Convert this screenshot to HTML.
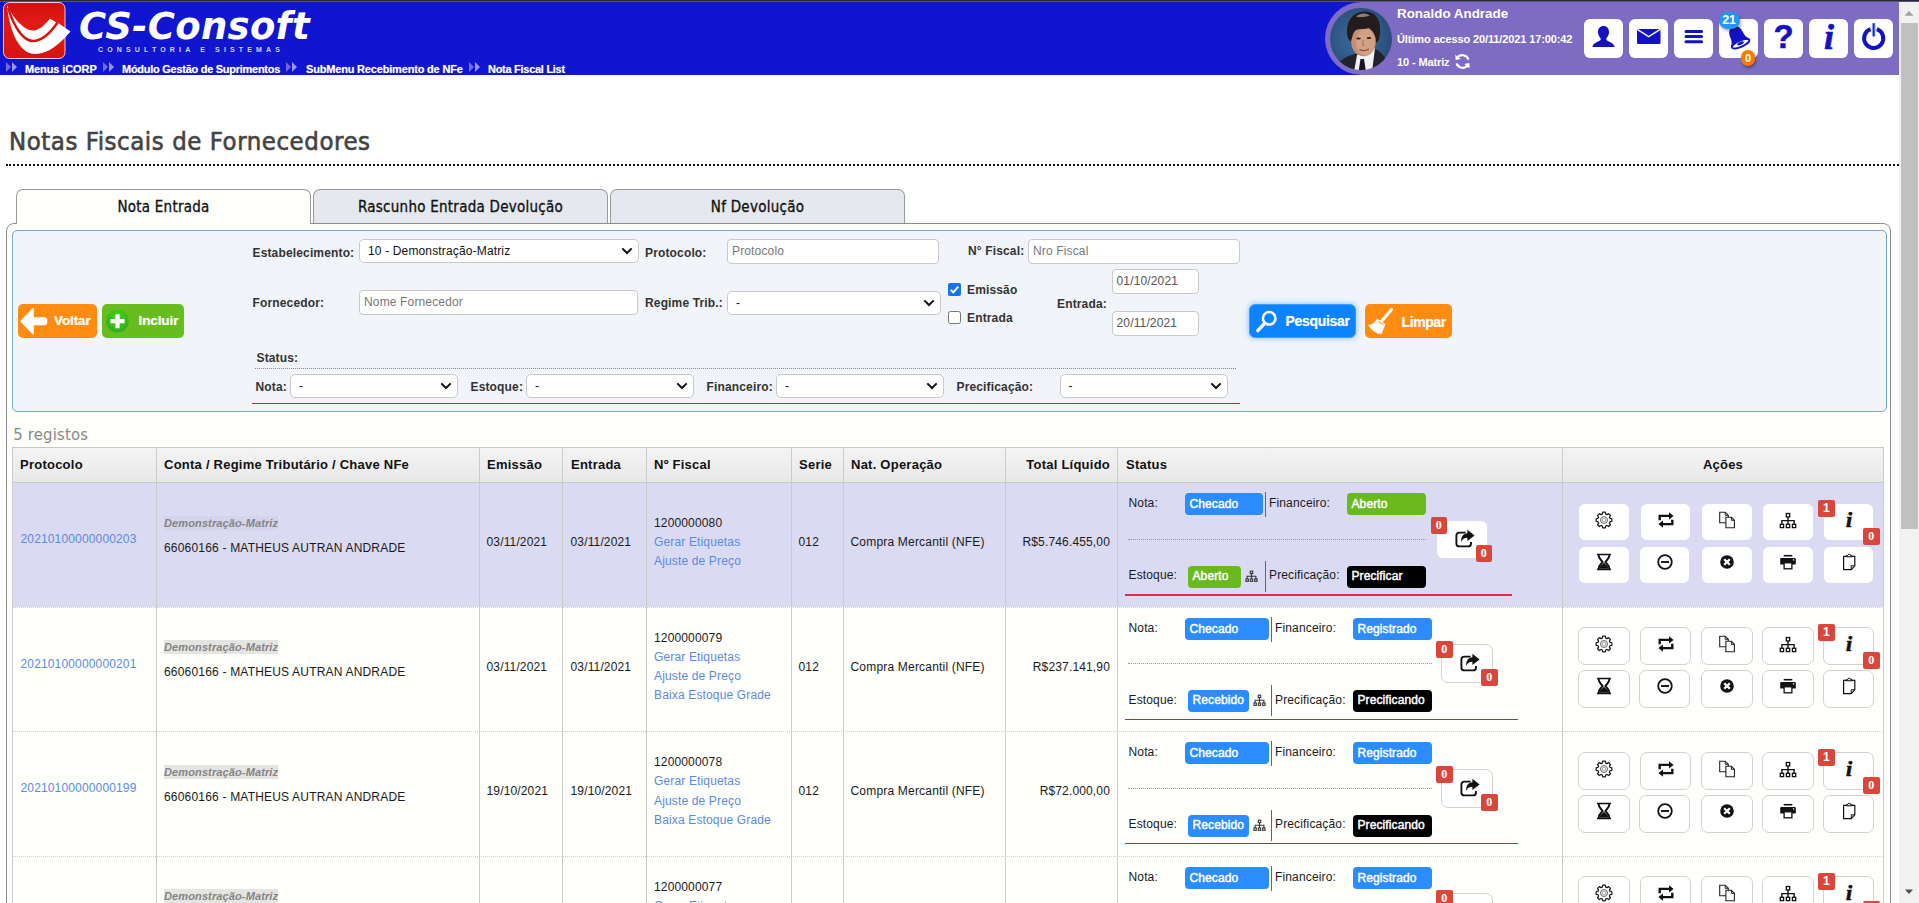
<!DOCTYPE html>
<html lang="pt-BR">
<head>
<meta charset="utf-8">
<title>Notas Fiscais de Fornecedores</title>
<style>
*{box-sizing:border-box}
html,body{margin:0;padding:0}
body{width:1919px;height:903px;overflow:hidden;position:relative;background:#fff;font-family:"Liberation Sans",Arial,sans-serif;font-size:12px;color:#222}
.abs{position:absolute}
/* ---------- top ---------- */
#topline{left:0;top:0;width:1919px;height:2px;background:#2b2b2b;border-bottom:1px solid #50508c}
#hdr{left:0;top:2px;width:1899px;height:73px;background:#1015cf;overflow:hidden}
#purple{left:1361px;top:0;width:538px;height:73px;background:#7e6bc4}
#pcirc{left:1325px;top:0;width:73px;height:73px;border-radius:50%;background:#7e6bc4}
#crumbs{left:0;top:58px;height:16px;color:#fff;font-size:11px;font-weight:bold;white-space:nowrap;letter-spacing:-.1px}
#crumbs span{position:absolute;top:4.5px;text-shadow:0 0 1px rgba(255,255,255,.5)}
#crumbs svg{position:absolute;top:2.5px}
.hbtn{position:absolute;top:19px;width:39px;height:39px;background:#fff;border-radius:6px}
.hbtn svg{position:absolute;left:0;top:0}
.uinfo{position:absolute;color:#fff;white-space:nowrap}
/* ---------- scrollbar ---------- */
#sb{left:1899px;top:2px;width:20px;height:901px;background:#f1f1f1}
#sbthumb{left:2px;top:21px;width:17px;height:506px;background:#c1c1c1}
/* ---------- title ---------- */
#title{-webkit-text-stroke:.6px #444;left:9px;top:125px;font-family:"DejaVu Sans Condensed","DejaVu Sans",sans-serif;font-size:25.5px;color:#444;letter-spacing:.55px;white-space:nowrap;line-height:32px}
#dots{left:6px;top:164px;width:1893px;height:0;border-top:2px dotted #111}
/* ---------- tabs ---------- */
.tab{position:absolute;top:189px;height:34px;border:1px solid #999;border-bottom:none;border-radius:7px 7px 0 0;background:#e5e8ee;font-family:"DejaVu Sans Condensed","DejaVu Sans",sans-serif;font-size:15px;letter-spacing:.25px;color:#111;-webkit-text-stroke:.3px #111;text-align:center;line-height:34px;white-space:nowrap}
.tab.on{background:#fefefa;height:35px;z-index:3}
#cont{left:6px;top:223px;width:1885px;height:700px;border:1px solid #8c8c8c;border-radius:8px;background:#fefefa}
#panel{left:12px;top:230px;width:1875px;height:182px;border:1px solid #74a9d2;border-radius:5px;background:#f1f4f9}

/* ---------- filter ---------- */
.fl{position:absolute;font:bold 12px/14px "Liberation Sans",sans-serif;color:#333;letter-spacing:.15px;white-space:nowrap}
.fi{position:absolute;background:#fff;border:1px solid #c9c9c9;border-radius:4px;font:12px/23px "Liberation Sans",sans-serif;color:#777;letter-spacing:.15px;white-space:nowrap;padding-left:4px;overflow:hidden}
.fs{position:absolute;background:#fff;border:1px solid #c9c9c9;border-radius:5px;font:12px/22px "Liberation Sans",sans-serif;color:#111;letter-spacing:.15px;white-space:nowrap;padding-left:8px;overflow:hidden;height:24px}
.fs svg{position:absolute;right:5px;top:7px}
.cb{position:absolute;width:13px;height:13px;border-radius:2px}
.btn{position:absolute;border-radius:5px;color:#fff;font:bold 13.5px/16px "Liberation Sans",sans-serif;white-space:nowrap;letter-spacing:-.1px}
.btn span{position:absolute;top:9px;text-shadow:0 0 1px rgba(255,255,255,.55)}
.btn svg{position:absolute;left:0;top:0}

/* ---------- table ---------- */
#reg{left:13.300px;top:425px;font:16.5px/20px "DejaVu Sans Condensed","DejaVu Sans",sans-serif;color:#888;letter-spacing:.2px;white-space:nowrap}
#tbl{left:12px;top:447px;width:1872px;height:470px;overflow:hidden}
#th{position:absolute;left:0;top:0;width:1872px;height:36px;border-top:1px solid #c8c8c8;border-bottom:1px solid #c8c8c8;background:linear-gradient(#f4f4f4,#e8e8e8)}
#th span{position:absolute;top:8.500px;font:bold 13px/15px "Liberation Sans",sans-serif;color:#111;letter-spacing:.24px;white-space:nowrap}
.row{position:absolute;left:0;width:1872px;background:#fefefa}
.row.hov{background:#dadaf3}
.row.hov+*{}
.row>*{position:absolute}
.tx{font:12px/14px "Liberation Sans",sans-serif;color:#1a1a1a;letter-spacing:.15px;white-space:nowrap}
a.lk{color:#5b8ae6;text-decoration:none}
.dm{font:italic bold 11px/14px "Liberation Sans",sans-serif;color:#848484;background:#e4e4e2;letter-spacing:.12px;white-space:nowrap}
.hov .dm{background:#d4d4ea}
.bd{height:22px;border-radius:4px;color:#fff;font:12px/22px "Liberation Sans",sans-serif;-webkit-text-stroke:.45px #fff;padding-left:4.500px;letter-spacing:.1px;white-space:nowrap;overflow:hidden}
.blue{background:#2b8cff}.green{background:#6aba1e}.black{background:#000}
.vs{width:1px;background:#666}
.dl{height:0;border-top:1px dotted #999}
.rl{height:1px;background:#a83232}
.hov .rl{height:1.500px;background:#d8304a}
.hl{position:absolute;left:0;width:1872px;height:0;border-top:1px dotted #cfcfcf}
.vl{position:absolute;top:0;width:1px;height:470px;background:#cbcbcb}
.ab{height:38px;background:#fff;border:1px solid #d2d2d2;border-radius:7px}
.hov .ab{border-color:#dadaf3}
.ab svg{position:absolute;left:16px;top:7px}
.ab.r2 svg{top:6px}
.ab.sh svg{left:0;top:0}
.ab .ic{position:absolute}
.ii{position:absolute;left:0;top:3px;width:50px;text-align:center;font:italic bold 22px/26px "Liberation Serif",serif;color:#111;-webkit-text-stroke:.7px #111}
.rb{width:16.500px;height:16.500px;border-radius:2px;background:#d9463c;color:#fff;font:bold 12px/16px "Liberation Serif",serif;text-align:center;z-index:2}
.rb.ss{font:bold 12px/16px "Liberation Sans",sans-serif}
.smi{width:13px;height:13px}
</style>
</head>
<body>
<div id="topline" class="abs"></div>
<div id="hdr" class="abs">
  <div id="purple" class="abs"></div>
  <div id="pcirc" class="abs"></div>
</div>

<!-- logo -->
<svg class="abs" style="left:0;top:0" width="80" height="62" viewBox="0 0 80 62">
  <defs><linearGradient id="lg" x1="0" y1="0" x2="0" y2="1"><stop offset="0" stop-color="#d01010"/><stop offset=".35" stop-color="#e21a12"/><stop offset="1" stop-color="#d61410"/></linearGradient></defs>
  <rect x="3.5" y="2.5" width="61.5" height="56" rx="6" fill="url(#lg)" stroke="#f6c8d4" stroke-width="1"/>
  <path d="M7,5 C9,28 18,54 35,54 C48,54 60,44 70.5,31.5 L58.5,23.2 L56.2,22.4 L50,18.4 C44,26 38,30.5 33,30.5 C24,30.5 13,18 7,5 Z" fill="#fff"/>
  <path d="M8.2,8 C13,24 22,41 33,41 C42,41 51,32 57.4,22.8" fill="none" stroke="#d8140f" stroke-width="2.5"/>
</svg>
<div class="abs" style="left:79px;top:5px;font:italic bold 37px/43px 'DejaVu Sans',sans-serif;color:#fff;letter-spacing:.3px;white-space:nowrap">CS-Consoft</div>
<div class="abs" style="left:98px;top:45px;font:bold 7px/9px 'Liberation Sans',sans-serif;color:#d4d4ff;letter-spacing:4.15px;white-space:nowrap">CONSULTORIA E SISTEMAS</div>
<!-- breadcrumbs -->
<div id="crumbs" class="abs">
  <svg style="left:5px" width="14" height="12" viewBox="0 0 14 12"><path d="M1,1 L6,6 L1,11Z" fill="#7468dc"/><path d="M7,1 L12,6 L7,11Z" fill="#9a92ea"/></svg>
  <span style="left:25px;letter-spacing:-.1px">Menus iCORP</span>
  <svg style="left:102px" width="14" height="12" viewBox="0 0 14 12"><path d="M1,1 L6,6 L1,11Z" fill="#7468dc"/><path d="M7,1 L12,6 L7,11Z" fill="#9a92ea"/></svg>
  <span style="left:122px;letter-spacing:-.27px">Módulo Gestão de Suprimentos</span>
  <svg style="left:285px" width="14" height="12" viewBox="0 0 14 12"><path d="M1,1 L6,6 L1,11Z" fill="#7468dc"/><path d="M7,1 L12,6 L7,11Z" fill="#9a92ea"/></svg>
  <span style="left:306px;letter-spacing:-.18px">SubMenu Recebimento de NFe</span>
  <svg style="left:468px" width="14" height="12" viewBox="0 0 14 12"><path d="M1,1 L6,6 L1,11Z" fill="#7468dc"/><path d="M7,1 L12,6 L7,11Z" fill="#9a92ea"/></svg>
  <span style="left:488px;letter-spacing:-.28px">Nota Fiscal List</span>
</div>
<!-- avatar -->
<svg class="abs" style="left:1330px;top:8px" width="62" height="62" viewBox="0 0 62 62">
  <defs><clipPath id="av"><circle cx="31" cy="31" r="31"/></clipPath>
  <radialGradient id="avbg" cx=".45" cy=".5" r=".6"><stop offset="0" stop-color="#3e6c9e"/><stop offset="1" stop-color="#25476f"/></radialGradient>
  <filter id="avb" x="-5%" y="-5%" width="110%" height="110%"><feGaussianBlur stdDeviation=".7"/></filter></defs>
  <g clip-path="url(#av)"><g filter="url(#avb)">
    <rect x="-4" y="-4" width="70" height="70" fill="url(#avbg)"/>
    <path d="M5,64 C7,53 15,48.500 26,45.500 L33,50 L45,41 C53,44 58,52 59,64 Z" fill="#22242e"/>
    <path d="M24,64 L27,47 L33,45 L45,40 L42,64 Z" fill="#f2f0f0"/>
    <path d="M28.500,64 L30.500,51 L34,51 L36,64 Z" fill="#15151d"/>
    <path d="M17.500,28 C14.500,12 25,2.500 36,3.500 C47,4.500 52,14 49.500,29 C49,33 47,35 45.500,34 L21.500,34 C19.500,33 18,31 17.500,28 Z" fill="#231b1d"/>
    <ellipse cx="33.500" cy="33.500" rx="12.300" ry="14.800" fill="#c39074"/>
    <ellipse cx="35.500" cy="34" rx="9.500" ry="13" fill="#d2a184"/>
    <path d="M19.500,30 C18,18 24,9 34,9 C44,9 49,16 47.500,29 C46.500,24 44,20.500 40,19.500 C34,22 27.500,20 24.500,23 C22.500,25.500 22.500,29 21.500,31.500 Z" fill="#231b1d"/>
    <path d="M26,8.500 C30,4.500 37,4.500 40,8 C35.500,8 30,10.500 26,8.500 Z" fill="#9a8f8f" opacity=".85"/>
    <ellipse cx="28.500" cy="30.500" rx="2.300" ry="1" fill="#2e201c"/>
    <ellipse cx="39" cy="30" rx="2.300" ry="1" fill="#2e201c"/>
    <path d="M33.500,32 L32.500,37 L35,37.500" fill="none" stroke="#a87258" stroke-width="1"/>
    <path d="M29.500,41.500 Q34,44 39,41" fill="none" stroke="#8a4a40" stroke-width="1.300"/>
  </g></g>
</svg>
<div class="uinfo" style="left:1397px;top:6px;font:bold 13.4px/16px 'Liberation Sans',sans-serif">Ronaldo Andrade</div>
<div class="uinfo" style="left:1397px;top:33px;font:bold 11px/13px 'Liberation Sans',sans-serif;letter-spacing:-.12px">Último acesso 20/11/2021 17:00:42</div>
<div class="uinfo" style="left:1397px;top:56px;font:bold 11px/13px 'Liberation Sans',sans-serif;letter-spacing:-.12px">10 - Matriz</div>
<svg class="abs" style="left:1454px;top:53px" width="17" height="17" viewBox="0 0 16 16"><path d="M13.6,6.2 A6,6 0 0 0 3,4.6" fill="none" stroke="#fff" stroke-width="2"/><path d="M2.4,9.8 A6,6 0 0 0 13,11.4" fill="none" stroke="#fff" stroke-width="2"/><path d="M1.2,1.6 L1.6,6.6 L6.4,5.6Z M14.8,14.4 L14.4,9.4 L9.6,10.4Z" fill="#fff"/></svg>
<!-- header buttons -->
<div class="hbtn" style="left:1584px"><svg width="39" height="39" viewBox="0 0 39 39"><path transform="translate(0,-1)" d="M19.5,8 C23,8 25,10.6 25,14 C25,16.6 23.8,19 22.4,20.2 L22.4,22 C24,23.6 30,24.6 30.6,29 L8.4,29 C9,24.6 15,23.6 16.6,22 L16.6,20.2 C15.2,19 14,16.6 14,14 C14,10.6 16,8 19.5,8Z" fill="#1212c4"/></svg></div>
<div class="hbtn" style="left:1629px"><svg width="39" height="39" viewBox="0 0 39 39"><rect x="8" y="10" width="23.5" height="15" rx="1" fill="#1212c4"/><path d="M8.3,10.3 L19.7,17.6 L31.2,10.3" fill="none" stroke="#f4f4ff" stroke-width="1.5"/></svg></div>
<div class="hbtn" style="left:1674px"><svg width="39" height="39" viewBox="0 0 39 39"><path d="M12,12.4 H27.6 M12,17.6 H27.6 M12,22.8 H27.6" stroke="#1212c4" stroke-width="3" stroke-linecap="round"/></svg></div>
<div class="hbtn" style="left:1719px"><svg width="39" height="39" viewBox="0 0 39 39"><g transform="translate(18.300 17.300) rotate(-24) scale(.86) translate(-20 -17)"><path d="M20,5 C25.5,5 28,9.5 28,15 C28,20 29.5,23 32,25.5 L8,25.5 C10.500,23 12,20 12,15 C12,9.5 14.500,5 20,5Z" fill="#1212c4"/><ellipse cx="20" cy="26.5" rx="11" ry="3.6" fill="#fff" stroke="#1212c4" stroke-width="2.2"/><ellipse cx="20" cy="26" rx="4.2" ry="1.7" fill="#1212c4"/></g></svg></div>
<div class="hbtn" style="left:1764px"><div style="position:absolute;left:0;top:-1px;width:39px;text-align:center;font:bold 33px/38px 'Liberation Sans',sans-serif;color:#1212c4;-webkit-text-stroke:.5px #1212c4">?</div></div>
<div class="hbtn" style="left:1809px"><div style="position:absolute;left:0;top:-2px;width:40px;text-align:center;font:italic bold 36px/40px 'Liberation Serif',serif;color:#1212c4;-webkit-text-stroke:.7px #1212c4">i</div></div>
<div class="hbtn" style="left:1854px"><svg width="39" height="39" viewBox="0 0 39 39"><path d="M16.6,10.2 A9.6,9.6 0 1 0 22.8,10.2" fill="none" stroke="#1212c4" stroke-width="4"/><path d="M19.7,4.2 V17.4" stroke="#8fa6ee" stroke-width="3.6"/><path d="M19.7,4.2 V17.4" stroke="#1a22b8" stroke-width="1.5"/></svg></div>
<div class="abs" style="left:1718.5px;top:12px;width:21px;height:17px;border-radius:9px;background:#2196f3;color:#fff;font:bold 12.5px/17px 'Liberation Sans',sans-serif;text-align:center;letter-spacing:-.3px;box-shadow:1px 2px 3px rgba(0,0,0,.35)">21</div>
<div class="abs" style="left:1741px;top:49.5px;width:14px;height:16.5px;border-radius:7px;background:#f57c00;color:#fff;font:bold 11px/16.5px 'Liberation Sans',sans-serif;text-align:center;box-shadow:1px 2px 3px rgba(0,0,0,.35)">0</div>
<div id="sb" class="abs"><div id="sbthumb" class="abs"></div><svg class="abs" style="left:0;top:0" width="20" height="901" viewBox="0 0 20 901"><path d="M5.500,13.800 L10,9 L14.500,13.800Z" fill="#a3a3a3"/><path d="M6,887.500 L10,892 L14,887.500Z" fill="#505050"/></svg></div>

<div id="title" class="abs">Notas Fiscais de Fornecedores</div>
<div id="dots" class="abs"></div>

<div id="cont" class="abs"></div>
<div class="tab on" style="left:16px;width:295px">Nota Entrada</div>
<div class="tab" style="left:313px;width:295px">Rascunho Entrada Devolução</div>
<div class="tab" style="left:610px;width:295px">Nf Devolução</div>
<div id="panel" class="abs"></div>

<!-- filter panel contents -->
<div class="btn" style="left:18px;top:304px;width:79px;height:34px;background:#ff8c10"><svg width="79" height="34" viewBox="0 0 79 34"><path d="M2,17.2 L14.6,4.200 Q15.8,3.300 15.8,5 L15.8,13.300 L26.500,13.300 Q29.200,13.300 29.200,16 L29.200,18.500 Q29.200,21.200 26.500,21.200 L15.8,21.200 L15.8,29.400 Q15.8,31.100 14.600,30.200 Z" fill="#fff"/></svg><span style="left:36px">Voltar</span></div>
<div class="btn" style="left:102px;top:304px;width:82px;height:34px;background:#68bd1e"><svg width="82" height="34" viewBox="0 0 82 34"><defs><radialGradient id="pg" cx=".5" cy=".35" r=".65"><stop offset="0" stop-color="#4ccf22"/><stop offset="1" stop-color="#2fae1c"/></radialGradient></defs><circle cx="15.500" cy="17.200" r="11.300" fill="url(#pg)"/><path d="M15.500,10.200 V24.200 M8.500,17.200 H22.500" stroke="#fff" stroke-width="4.200"/></svg><span style="left:36.500px">Incluir</span></div>

<div class="fl" style="left:252.500px;top:246px">Estabelecimento:</div>
<div class="fs" style="left:359px;top:239px;width:280px">10 - Demonstração-Matriz<svg width="12" height="8" viewBox="0 0 12 8"><path d="M1.300,1.400 L6,6 L10.700,1.400" fill="none" stroke="#111" stroke-width="2"/></svg></div>
<div class="fl" style="left:645px;top:246px">Protocolo:</div>
<div class="fi" style="left:727px;top:239px;width:212px;height:25px">Protocolo</div>
<div class="fl" style="left:968px;top:244px">N° Fiscal:</div>
<div class="fi" style="left:1028px;top:239px;width:211.500px;height:25px">Nro Fiscal</div>

<div class="fl" style="left:252.500px;top:296px">Fornecedor:</div>
<div class="fi" style="left:359px;top:290px;width:279px;height:25px">Nome Fornecedor</div>
<div class="fl" style="left:645px;top:296px">Regime Trib.:</div>
<div class="fs" style="left:727px;top:291px;width:213.500px">-<svg width="12" height="8" viewBox="0 0 12 8"><path d="M1.300,1.400 L6,6 L10.700,1.400" fill="none" stroke="#111" stroke-width="2"/></svg></div>

<div class="cb" style="left:948px;top:283px;background:#1a73e8"><svg width="13" height="13" viewBox="0 0 13 13" style="position:absolute;left:0;top:0"><path d="M2.800,6.800 L5.300,9.300 L10.300,3.600" fill="none" stroke="#fff" stroke-width="1.900"/></svg></div>
<div class="fl" style="left:967px;top:283px">Emissão</div>
<div class="cb" style="left:948px;top:311px;background:#fff;border:1px solid #767676;border-radius:2.500px"></div>
<div class="fl" style="left:967px;top:311px">Entrada</div>

<div class="fl" style="left:1057px;top:297px">Entrada:</div>
<div class="fi" style="left:1111.500px;top:269px;width:87px;height:25px;color:#555">01/10/2021</div>
<div class="fi" style="left:1111.500px;top:311px;width:87px;height:25px;color:#555">20/11/2021</div>

<div class="btn" style="left:1249px;top:304px;width:107px;height:33.500px;background:#0d84ff;border:1.500px solid #3f9dff;border-radius:6px;box-shadow:0 0 5px 1px rgba(110,175,255,.6);font-size:14px;letter-spacing:-.3px"><svg width="105" height="32" viewBox="0 0 105 32" style="left:-.500px;top:-.500px"><circle cx="19.200" cy="13.300" r="6.300" fill="none" stroke="#fff" stroke-width="2.500"/><path d="M14.400,18.600 L7.800,25.600" stroke="#fff" stroke-width="3.400" stroke-linecap="round"/></svg><span style="left:35.500px;top:8px">Pesquisar</span></div>
<div class="btn" style="left:1365px;top:304px;width:87px;height:34px;background:#ff8c10;font-size:14px;letter-spacing:-.4px"><svg width="87" height="34" viewBox="0 0 87 34"><path d="M26.500,5.500 L16.500,17.500" stroke="#fff" stroke-width="3" stroke-linecap="round"/><path d="M12,14.500 L20.500,20.200 L16.500,30 Q9,30 3,21 Q9,20.500 12,14.500Z" fill="#fff"/><path d="M13.200,17.300 L18.400,20.900" stroke="#ffb05a" stroke-width="1.300"/></svg><span style="left:36.500px;top:9.500px">Limpar</span></div>

<div class="fl" style="left:256.500px;top:351px">Status:</div>
<div class="abs" style="left:255px;top:368px;width:981px;height:0;border-top:1px dotted #888"></div>
<div class="fl" style="left:255.500px;top:380px">Nota:</div>
<div class="fs" style="left:290px;top:374px;width:168px">-<svg width="12" height="8" viewBox="0 0 12 8"><path d="M1.300,1.400 L6,6 L10.700,1.400" fill="none" stroke="#111" stroke-width="2"/></svg></div>
<div class="fl" style="left:470.500px;top:380px">Estoque:</div>
<div class="fs" style="left:526px;top:374px;width:168px">-<svg width="12" height="8" viewBox="0 0 12 8"><path d="M1.300,1.400 L6,6 L10.700,1.400" fill="none" stroke="#111" stroke-width="2"/></svg></div>
<div class="fl" style="left:706.500px;top:380px">Financeiro:</div>
<div class="fs" style="left:776px;top:374px;width:168px">-<svg width="12" height="8" viewBox="0 0 12 8"><path d="M1.300,1.400 L6,6 L10.700,1.400" fill="none" stroke="#111" stroke-width="2"/></svg></div>
<div class="fl" style="left:956.500px;top:380px">Precificação:</div>
<div class="fs" style="left:1059.500px;top:374px;width:168px">-<svg width="12" height="8" viewBox="0 0 12 8"><path d="M1.300,1.400 L6,6 L10.700,1.400" fill="none" stroke="#111" stroke-width="2"/></svg></div>
<div class="abs" style="left:252px;top:403px;width:988px;height:1px;background:#a83434"></div>

<!--TABLE-START-->
<div id="reg" class="abs">5 registos</div>
<div id="tbl" class="abs">
<div id="th">
<span style="left:8px">Protocolo</span>
<span style="left:152px">Conta / Regime Tributário / Chave NFe</span>
<span style="left:475px">Emissão</span>
<span style="left:559px">Entrada</span>
<span style="left:642px">Nº Fiscal</span>
<span style="left:787px">Serie</span>
<span style="left:839px">Nat. Operação</span>
<span style="right:774px">Total Líquido</span>
<span style="left:1114px">Status</span>
<span style="left:1551px;width:320px;text-align:center">Ações</span>
</div>
<div class="row hov" style="top:36px;height:124px">
<a class="lk tx" style="left:8.500px;top:49px">20210100000000203</a>
<span class="dm" style="left:152px;top:33px">Demonstração-Matriz</span>
<span class="tx" style="left:152px;top:58px;letter-spacing:.19px">66060166 - MATHEUS AUTRAN ANDRADE</span>
<span class="tx" style="left:474.500px;top:52px">03/11/2021</span>
<span class="tx" style="left:558.500px;top:52px">03/11/2021</span>
<span class="tx" style="left:642px;top:33px">1200000080</span>
<a class="lk tx" style="left:642px;top:52px">Gerar Etiquetas</a>
<a class="lk tx" style="left:642px;top:71px">Ajuste de Preço</a>
<span class="tx" style="left:786.500px;top:52px">012</span>
<span class="tx" style="left:838.500px;top:52px;letter-spacing:.19px">Compra Mercantil (NFE)</span>
<span class="tx" style="right:774px;top:52px">R$5.746.455,00</span>
<span class="tx" style="left:1116.500px;top:13px">Nota:</span>
<span class="bd blue" style="left:1173px;top:10px;width:78px">Checado</span>
<i class="vs" style="left:1253px;top:9px;height:25px"></i>
<span class="tx" style="left:1257px;top:13px">Financeiro:</span>
<span class="bd green" style="left:1335px;top:10px;width:79px">Aberto</span>
<i class="dl" style="left:1116px;top:56px;width:298px"></i>
<span class="tx" style="left:1116.500px;top:85px">Estoque:</span>
<span class="bd green" style="left:1176px;top:83px;width:53px;height:22px;line-height:20.500px">Aberto</span>
<span class="smi" style="left:1232.5px;top:87px"><svg width="13" height="13" viewBox="0 0 18 18"><rect x="7.300" y="1.600" width="3.400" height="3.400" fill="none" stroke="#333" stroke-width="1.500"/><path d="M9,5 V12 M2.900,12.400 V8.700 H15.100 V12.400" fill="none" stroke="#333" stroke-width="1.500"/><rect x="1.300" y="12.400" width="3.300" height="3.300" fill="none" stroke="#333" stroke-width="1.500"/><rect x="7.350" y="12.400" width="3.300" height="3.300" fill="none" stroke="#333" stroke-width="1.500"/><rect x="13.400" y="12.400" width="3.300" height="3.300" fill="none" stroke="#333" stroke-width="1.500"/></svg></span>
<i class="vs" style="left:1253px;top:78px;height:31px"></i>
<span class="tx" style="left:1257px;top:85px">Precificação:</span>
<span class="bd black" style="left:1335px;top:83px;width:79px;height:22px;line-height:20.500px">Precificar</span>
<i class="rl" style="left:1113px;top:111px;width:387px"></i>
<span class="ab sh" style="left:1423.5px;top:37px;width:52px;height:38.500px"><span class="ic" style="left:17px;top:8px"><svg width="22" height="20" viewBox="0 0 22 20"><path d="M11.600,3.600 H5.400 Q2.400,3.600 2.400,6.600 V14.400 Q2.400,17.400 5.400,17.400 H14 Q17,17.400 17,14.400 V13" fill="none" stroke="#111" stroke-width="1.900"/><path d="M13.400,0.800 L20.600,6.400 L13.400,12 V8.700 C10.400,8.700 8.400,9.700 7.200,13 C6.800,8 9.400,4.600 13.400,4.300 Z" fill="#111"/></svg></span></span>
<span class="rb" style="left:1418.5px;top:34px">0</span>
<span class="rb" style="left:1463.5px;top:62px">0</span>
<span class="ab" style="left:1566px;top:20px;width:52px"><svg width="18" height="18" viewBox="0 0 18 18"><path d="M7.700,1.200 h2.600 l.4,1.900 l1.300,.55 l1.650,-1.050 l1.800,1.800 l-1.050,1.650 l.55,1.300 l1.900,.4 v2.600 l-1.900,.4 l-.55,1.300 l1.050,1.650 l-1.800,1.800 l-1.650,-1.050 l-1.300,.55 l-.4,1.900 h-2.600 l-.4,-1.900 l-1.300,-.55 l-1.650,1.050 l-1.800,-1.800 l1.050,-1.650 l-.55,-1.300 l-1.900,-.4 v-2.600 l1.900,-.4 l.55,-1.300 l-1.050,-1.650 l1.800,-1.800 l1.650,1.050 l1.300,-.55 z" fill="none" stroke="#1a1a1a" stroke-width="1.250" stroke-linejoin="round"/><circle cx="9" cy="9" r="3.500" fill="none" stroke="#555" stroke-width=".9"/><circle cx="9" cy="9" r="1.800" fill="none" stroke="#888" stroke-width=".8"/></svg></span>
<span class="ab" style="left:1628px;top:20px;width:51px"><svg width="18" height="18" viewBox="0 0 18 18"><path d="M2.700,9.300 V4.900 H12.400" fill="none" stroke="#111" stroke-width="2.400"/><path d="M12,1.300 L16.600,4.900 L12,8.500 Z" fill="#111"/><path d="M15.300,8.700 V13.100 H5.600" fill="none" stroke="#111" stroke-width="2.400"/><path d="M6,9.500 L1.400,13.100 L6,16.700 Z" fill="#111"/></svg></span>
<span class="ab" style="left:1689px;top:20px;width:52px"><svg width="18" height="18" viewBox="0 0 18 18"><path d="M1.700,1.200 H7.200 L10.300,4.300 V11.800 H1.700 Z" fill="#fff" stroke="#222" stroke-width="1.100"/><path d="M7.200,1.200 V4.300 H10.300" fill="none" stroke="#222" stroke-width="1"/><path d="M7.900,6.300 H13.400 L16.400,9.300 V16.700 H7.900 Z" fill="#fff" stroke="#222" stroke-width="1.100"/><path d="M13.400,6.300 V9.300 H16.400" fill="none" stroke="#222" stroke-width="1"/></svg></span>
<span class="ab" style="left:1750px;top:20px;width:52px"><svg width="18" height="18" viewBox="0 -0.9 18 18"><rect x="7.300" y="1.600" width="3.400" height="3.400" fill="#fff" stroke="#111" stroke-width="1.300"/><path d="M9,5 V12 M2.900,12.400 V8.700 H15.100 V12.400" fill="none" stroke="#111" stroke-width="1.400"/><rect x="1.300" y="12.400" width="3.300" height="3.300" fill="#fff" stroke="#111" stroke-width="1.300"/><rect x="7.350" y="12.400" width="3.300" height="3.300" fill="#fff" stroke="#111" stroke-width="1.300"/><rect x="13.400" y="12.400" width="3.300" height="3.300" fill="#fff" stroke="#111" stroke-width="1.300"/></svg></span>
<span class="ab" style="left:1811px;top:20px;width:51px"><span class="ii">i</span></span>
<span class="ab r2" style="left:1566px;top:63px;width:52px"><svg width="18" height="18" viewBox="0 0 18 18"><path d="M2,1.600 H16 M2,16.400 H16" stroke="#111" stroke-width="1.500"/><path d="M3.600,2 C3.600,6 6.800,7.400 7.600,9 C6.800,10.600 3.600,12 3.600,16 M14.400,2 C14.400,6 11.200,7.400 10.400,9 C11.200,10.600 14.400,12 14.400,16" fill="none" stroke="#111" stroke-width="1.900"/><path d="M4.200,15.800 C4.600,12.800 7.600,11.800 9,9.600 C10.400,11.800 13.400,12.800 13.800,15.800 Z" fill="#111"/></svg></span>
<span class="ab r2" style="left:1627px;top:63px;width:51px"><svg width="18" height="18" viewBox="0 0 18 18"><circle cx="9" cy="9" r="6.800" fill="none" stroke="#111" stroke-width="1.800"/><path d="M5,9 H13" stroke="#111" stroke-width="1.900"/></svg></span>
<span class="ab r2" style="left:1689px;top:63px;width:52px"><svg width="18" height="18" viewBox="0 0 18 18"><circle cx="9" cy="9" r="6.800" fill="#111"/><path d="M6.200,6.200 L11.800,11.800 M11.800,6.200 L6.200,11.800" stroke="#fff" stroke-width="2.300"/></svg></span>
<span class="ab r2" style="left:1750px;top:63px;width:52px"><svg width="18" height="18" viewBox="0 0 18 18"><path d="M4.700,2.700 H13.300" stroke="#111" stroke-width="1.600"/><rect x="1.200" y="5" width="15.600" height="6.600" rx="1.200" fill="#111"/><rect x="5.100" y="9.800" width="7.800" height="6" fill="#fff" stroke="#111" stroke-width="1.300"/><circle cx="14.600" cy="6.900" r=".8" fill="#cde"/></svg></span>
<span class="ab r2" style="left:1811px;top:63px;width:51px"><svg width="18" height="18" viewBox="0 0 18 18"><path d="M3.600,3.400 H14.800 V12.800 L11.200,16.600 H3.600 Z" fill="#fff" stroke="#111" stroke-width="1.200"/><path d="M14.800,12.800 H11.200 V16.600" fill="none" stroke="#111" stroke-width="1"/><path d="M6.200,3.800 H12.200 V2.700 H10.700 A1.500,1.500 0 0 0 7.700,2.700 H6.200 Z" fill="#fff" stroke="#111" stroke-width="1"/></svg></span>
<span class="rb ss" style="left:1806px;top:17px">1</span>
<span class="rb" style="left:1851px;top:45px">0</span>
</div>
<div class="row" style="top:161px;height:123px">
<a class="lk tx" style="left:8.500px;top:49px">20210100000000201</a>
<span class="dm" style="left:152px;top:32px">Demonstração-Matriz</span>
<span class="tx" style="left:152px;top:57px;letter-spacing:.19px">66060166 - MATHEUS AUTRAN ANDRADE</span>
<span class="tx" style="left:474.500px;top:52px">03/11/2021</span>
<span class="tx" style="left:558.500px;top:52px">03/11/2021</span>
<span class="tx" style="left:642px;top:23px">1200000079</span>
<a class="lk tx" style="left:642px;top:42px">Gerar Etiquetas</a>
<a class="lk tx" style="left:642px;top:61px">Ajuste de Preço</a>
<a class="lk tx" style="left:642px;top:80px">Baixa Estoque Grade</a>
<span class="tx" style="left:786.500px;top:52px">012</span>
<span class="tx" style="left:838.500px;top:52px;letter-spacing:.19px">Compra Mercantil (NFE)</span>
<span class="tx" style="right:774px;top:52px">R$237.141,90</span>
<span class="tx" style="left:1116.500px;top:13px">Nota:</span>
<span class="bd blue" style="left:1173px;top:10px;width:84px">Checado</span>
<i class="vs" style="left:1259px;top:9px;height:25px"></i>
<span class="tx" style="left:1263px;top:13px">Financeiro:</span>
<span class="bd blue" style="left:1341px;top:10px;width:79px">Registrado</span>
<i class="dl" style="left:1116px;top:55px;width:304px"></i>
<span class="tx" style="left:1116.500px;top:85px">Estoque:</span>
<span class="bd blue" style="left:1176px;top:82px;width:61px;height:22px;line-height:20.500px">Recebido</span>
<span class="smi" style="left:1240.5px;top:86px"><svg width="13" height="13" viewBox="0 0 18 18"><rect x="7.300" y="1.600" width="3.400" height="3.400" fill="none" stroke="#333" stroke-width="1.500"/><path d="M9,5 V12 M2.900,12.400 V8.700 H15.100 V12.400" fill="none" stroke="#333" stroke-width="1.500"/><rect x="1.300" y="12.400" width="3.300" height="3.300" fill="none" stroke="#333" stroke-width="1.500"/><rect x="7.350" y="12.400" width="3.300" height="3.300" fill="none" stroke="#333" stroke-width="1.500"/><rect x="13.400" y="12.400" width="3.300" height="3.300" fill="none" stroke="#333" stroke-width="1.500"/></svg></span>
<i class="vs" style="left:1259px;top:77px;height:31px"></i>
<span class="tx" style="left:1263px;top:85px">Precificação:</span>
<span class="bd black" style="left:1341px;top:82px;width:79px;height:22px;line-height:20.500px">Precificando</span>
<i class="rl" style="left:1113px;top:111px;width:393px"></i>
<span class="ab sh" style="left:1429px;top:36px;width:52px;height:38.500px"><span class="ic" style="left:17px;top:8px"><svg width="22" height="20" viewBox="0 0 22 20"><path d="M11.600,3.600 H5.400 Q2.400,3.600 2.400,6.600 V14.400 Q2.400,17.400 5.400,17.400 H14 Q17,17.400 17,14.400 V13" fill="none" stroke="#111" stroke-width="1.900"/><path d="M13.400,0.800 L20.600,6.400 L13.400,12 V8.700 C10.400,8.700 8.400,9.700 7.200,13 C6.800,8 9.400,4.600 13.400,4.300 Z" fill="#111"/></svg></span></span>
<span class="rb" style="left:1424px;top:33px">0</span>
<span class="rb" style="left:1469px;top:61px">0</span>
<span class="ab" style="left:1566px;top:19px;width:52px"><svg width="18" height="18" viewBox="0 0 18 18"><path d="M7.700,1.200 h2.600 l.4,1.900 l1.300,.55 l1.650,-1.050 l1.800,1.800 l-1.050,1.650 l.55,1.300 l1.900,.4 v2.600 l-1.900,.4 l-.55,1.300 l1.050,1.650 l-1.800,1.800 l-1.650,-1.050 l-1.300,.55 l-.4,1.900 h-2.600 l-.4,-1.900 l-1.300,-.55 l-1.650,1.050 l-1.800,-1.800 l1.050,-1.650 l-.55,-1.300 l-1.900,-.4 v-2.600 l1.900,-.4 l.55,-1.300 l-1.050,-1.650 l1.800,-1.800 l1.650,1.050 l1.300,-.55 z" fill="none" stroke="#1a1a1a" stroke-width="1.250" stroke-linejoin="round"/><circle cx="9" cy="9" r="3.500" fill="none" stroke="#555" stroke-width=".9"/><circle cx="9" cy="9" r="1.800" fill="none" stroke="#888" stroke-width=".8"/></svg></span>
<span class="ab" style="left:1628px;top:19px;width:51px"><svg width="18" height="18" viewBox="0 0 18 18"><path d="M2.700,9.300 V4.900 H12.400" fill="none" stroke="#111" stroke-width="2.400"/><path d="M12,1.300 L16.600,4.900 L12,8.500 Z" fill="#111"/><path d="M15.300,8.700 V13.100 H5.600" fill="none" stroke="#111" stroke-width="2.400"/><path d="M6,9.500 L1.400,13.100 L6,16.700 Z" fill="#111"/></svg></span>
<span class="ab" style="left:1689px;top:19px;width:52px"><svg width="18" height="18" viewBox="0 0 18 18"><path d="M1.700,1.200 H7.200 L10.300,4.300 V11.800 H1.700 Z" fill="#fff" stroke="#222" stroke-width="1.100"/><path d="M7.200,1.200 V4.300 H10.300" fill="none" stroke="#222" stroke-width="1"/><path d="M7.900,6.300 H13.400 L16.400,9.300 V16.700 H7.900 Z" fill="#fff" stroke="#222" stroke-width="1.100"/><path d="M13.400,6.300 V9.300 H16.400" fill="none" stroke="#222" stroke-width="1"/></svg></span>
<span class="ab" style="left:1750px;top:19px;width:52px"><svg width="18" height="18" viewBox="0 -0.9 18 18"><rect x="7.300" y="1.600" width="3.400" height="3.400" fill="#fff" stroke="#111" stroke-width="1.300"/><path d="M9,5 V12 M2.900,12.400 V8.700 H15.100 V12.400" fill="none" stroke="#111" stroke-width="1.400"/><rect x="1.300" y="12.400" width="3.300" height="3.300" fill="#fff" stroke="#111" stroke-width="1.300"/><rect x="7.350" y="12.400" width="3.300" height="3.300" fill="#fff" stroke="#111" stroke-width="1.300"/><rect x="13.400" y="12.400" width="3.300" height="3.300" fill="#fff" stroke="#111" stroke-width="1.300"/></svg></span>
<span class="ab" style="left:1811px;top:19px;width:51px"><span class="ii">i</span></span>
<span class="ab r2" style="left:1566px;top:62px;width:52px"><svg width="18" height="18" viewBox="0 0 18 18"><path d="M2,1.600 H16 M2,16.400 H16" stroke="#111" stroke-width="1.500"/><path d="M3.600,2 C3.600,6 6.800,7.400 7.600,9 C6.800,10.600 3.600,12 3.600,16 M14.400,2 C14.400,6 11.200,7.400 10.400,9 C11.200,10.600 14.400,12 14.400,16" fill="none" stroke="#111" stroke-width="1.900"/><path d="M4.200,15.800 C4.600,12.800 7.600,11.800 9,9.600 C10.400,11.800 13.400,12.800 13.800,15.800 Z" fill="#111"/></svg></span>
<span class="ab r2" style="left:1627px;top:62px;width:51px"><svg width="18" height="18" viewBox="0 0 18 18"><circle cx="9" cy="9" r="6.800" fill="none" stroke="#111" stroke-width="1.800"/><path d="M5,9 H13" stroke="#111" stroke-width="1.900"/></svg></span>
<span class="ab r2" style="left:1689px;top:62px;width:52px"><svg width="18" height="18" viewBox="0 0 18 18"><circle cx="9" cy="9" r="6.800" fill="#111"/><path d="M6.200,6.200 L11.800,11.800 M11.800,6.200 L6.200,11.800" stroke="#fff" stroke-width="2.300"/></svg></span>
<span class="ab r2" style="left:1750px;top:62px;width:52px"><svg width="18" height="18" viewBox="0 0 18 18"><path d="M4.700,2.700 H13.300" stroke="#111" stroke-width="1.600"/><rect x="1.200" y="5" width="15.600" height="6.600" rx="1.200" fill="#111"/><rect x="5.100" y="9.800" width="7.800" height="6" fill="#fff" stroke="#111" stroke-width="1.300"/><circle cx="14.600" cy="6.900" r=".8" fill="#cde"/></svg></span>
<span class="ab r2" style="left:1811px;top:62px;width:51px"><svg width="18" height="18" viewBox="0 0 18 18"><path d="M3.600,3.400 H14.800 V12.800 L11.200,16.600 H3.600 Z" fill="#fff" stroke="#111" stroke-width="1.200"/><path d="M14.800,12.800 H11.200 V16.600" fill="none" stroke="#111" stroke-width="1"/><path d="M6.200,3.800 H12.200 V2.700 H10.700 A1.500,1.500 0 0 0 7.700,2.700 H6.200 Z" fill="#fff" stroke="#111" stroke-width="1"/></svg></span>
<span class="rb ss" style="left:1806px;top:16px">1</span>
<span class="rb" style="left:1851px;top:44px">0</span>
</div>
<div class="row" style="top:285px;height:124px">
<a class="lk tx" style="left:8.500px;top:49px">20210100000000199</a>
<span class="dm" style="left:152px;top:33px">Demonstração-Matriz</span>
<span class="tx" style="left:152px;top:58px;letter-spacing:.19px">66060166 - MATHEUS AUTRAN ANDRADE</span>
<span class="tx" style="left:474.500px;top:52px">19/10/2021</span>
<span class="tx" style="left:558.500px;top:52px">19/10/2021</span>
<span class="tx" style="left:642px;top:23px">1200000078</span>
<a class="lk tx" style="left:642px;top:42px">Gerar Etiquetas</a>
<a class="lk tx" style="left:642px;top:62px">Ajuste de Preço</a>
<a class="lk tx" style="left:642px;top:81px">Baixa Estoque Grade</a>
<span class="tx" style="left:786.500px;top:52px">012</span>
<span class="tx" style="left:838.500px;top:52px;letter-spacing:.19px">Compra Mercantil (NFE)</span>
<span class="tx" style="right:774px;top:52px">R$72.000,00</span>
<span class="tx" style="left:1116.500px;top:13px">Nota:</span>
<span class="bd blue" style="left:1173px;top:10px;width:84px">Checado</span>
<i class="vs" style="left:1259px;top:9px;height:25px"></i>
<span class="tx" style="left:1263px;top:13px">Financeiro:</span>
<span class="bd blue" style="left:1341px;top:10px;width:79px">Registrado</span>
<i class="dl" style="left:1116px;top:56px;width:304px"></i>
<span class="tx" style="left:1116.500px;top:85px">Estoque:</span>
<span class="bd blue" style="left:1176px;top:83px;width:61px;height:22px;line-height:20.500px">Recebido</span>
<span class="smi" style="left:1240.5px;top:87px"><svg width="13" height="13" viewBox="0 0 18 18"><rect x="7.300" y="1.600" width="3.400" height="3.400" fill="none" stroke="#333" stroke-width="1.500"/><path d="M9,5 V12 M2.900,12.400 V8.700 H15.100 V12.400" fill="none" stroke="#333" stroke-width="1.500"/><rect x="1.300" y="12.400" width="3.300" height="3.300" fill="none" stroke="#333" stroke-width="1.500"/><rect x="7.350" y="12.400" width="3.300" height="3.300" fill="none" stroke="#333" stroke-width="1.500"/><rect x="13.400" y="12.400" width="3.300" height="3.300" fill="none" stroke="#333" stroke-width="1.500"/></svg></span>
<i class="vs" style="left:1259px;top:78px;height:31px"></i>
<span class="tx" style="left:1263px;top:85px">Precificação:</span>
<span class="bd black" style="left:1341px;top:83px;width:79px;height:22px;line-height:20.500px">Precificando</span>
<i class="rl" style="left:1113px;top:111px;width:393px"></i>
<span class="ab sh" style="left:1429px;top:37px;width:52px;height:38.500px"><span class="ic" style="left:17px;top:8px"><svg width="22" height="20" viewBox="0 0 22 20"><path d="M11.600,3.600 H5.400 Q2.400,3.600 2.400,6.600 V14.400 Q2.400,17.400 5.400,17.400 H14 Q17,17.400 17,14.400 V13" fill="none" stroke="#111" stroke-width="1.900"/><path d="M13.400,0.800 L20.600,6.400 L13.400,12 V8.700 C10.400,8.700 8.400,9.700 7.200,13 C6.800,8 9.400,4.600 13.400,4.300 Z" fill="#111"/></svg></span></span>
<span class="rb" style="left:1424px;top:34px">0</span>
<span class="rb" style="left:1469px;top:62px">0</span>
<span class="ab" style="left:1566px;top:20px;width:52px"><svg width="18" height="18" viewBox="0 0 18 18"><path d="M7.700,1.200 h2.600 l.4,1.900 l1.300,.55 l1.650,-1.050 l1.800,1.800 l-1.050,1.650 l.55,1.300 l1.900,.4 v2.600 l-1.900,.4 l-.55,1.300 l1.050,1.650 l-1.800,1.800 l-1.650,-1.050 l-1.300,.55 l-.4,1.900 h-2.600 l-.4,-1.900 l-1.300,-.55 l-1.650,1.050 l-1.800,-1.800 l1.050,-1.650 l-.55,-1.300 l-1.900,-.4 v-2.600 l1.900,-.4 l.55,-1.300 l-1.050,-1.650 l1.800,-1.800 l1.650,1.050 l1.300,-.55 z" fill="none" stroke="#1a1a1a" stroke-width="1.250" stroke-linejoin="round"/><circle cx="9" cy="9" r="3.500" fill="none" stroke="#555" stroke-width=".9"/><circle cx="9" cy="9" r="1.800" fill="none" stroke="#888" stroke-width=".8"/></svg></span>
<span class="ab" style="left:1628px;top:20px;width:51px"><svg width="18" height="18" viewBox="0 0 18 18"><path d="M2.700,9.300 V4.900 H12.400" fill="none" stroke="#111" stroke-width="2.400"/><path d="M12,1.300 L16.600,4.900 L12,8.500 Z" fill="#111"/><path d="M15.300,8.700 V13.100 H5.600" fill="none" stroke="#111" stroke-width="2.400"/><path d="M6,9.500 L1.400,13.100 L6,16.700 Z" fill="#111"/></svg></span>
<span class="ab" style="left:1689px;top:20px;width:52px"><svg width="18" height="18" viewBox="0 0 18 18"><path d="M1.700,1.200 H7.200 L10.300,4.300 V11.800 H1.700 Z" fill="#fff" stroke="#222" stroke-width="1.100"/><path d="M7.200,1.200 V4.300 H10.300" fill="none" stroke="#222" stroke-width="1"/><path d="M7.900,6.300 H13.400 L16.400,9.300 V16.700 H7.900 Z" fill="#fff" stroke="#222" stroke-width="1.100"/><path d="M13.400,6.300 V9.300 H16.400" fill="none" stroke="#222" stroke-width="1"/></svg></span>
<span class="ab" style="left:1750px;top:20px;width:52px"><svg width="18" height="18" viewBox="0 -0.9 18 18"><rect x="7.300" y="1.600" width="3.400" height="3.400" fill="#fff" stroke="#111" stroke-width="1.300"/><path d="M9,5 V12 M2.900,12.400 V8.700 H15.100 V12.400" fill="none" stroke="#111" stroke-width="1.400"/><rect x="1.300" y="12.400" width="3.300" height="3.300" fill="#fff" stroke="#111" stroke-width="1.300"/><rect x="7.350" y="12.400" width="3.300" height="3.300" fill="#fff" stroke="#111" stroke-width="1.300"/><rect x="13.400" y="12.400" width="3.300" height="3.300" fill="#fff" stroke="#111" stroke-width="1.300"/></svg></span>
<span class="ab" style="left:1811px;top:20px;width:51px"><span class="ii">i</span></span>
<span class="ab r2" style="left:1566px;top:63px;width:52px"><svg width="18" height="18" viewBox="0 0 18 18"><path d="M2,1.600 H16 M2,16.400 H16" stroke="#111" stroke-width="1.500"/><path d="M3.600,2 C3.600,6 6.800,7.400 7.600,9 C6.800,10.600 3.600,12 3.600,16 M14.400,2 C14.400,6 11.200,7.400 10.400,9 C11.200,10.600 14.400,12 14.400,16" fill="none" stroke="#111" stroke-width="1.900"/><path d="M4.200,15.800 C4.600,12.800 7.600,11.800 9,9.600 C10.400,11.800 13.400,12.800 13.800,15.800 Z" fill="#111"/></svg></span>
<span class="ab r2" style="left:1627px;top:63px;width:51px"><svg width="18" height="18" viewBox="0 0 18 18"><circle cx="9" cy="9" r="6.800" fill="none" stroke="#111" stroke-width="1.800"/><path d="M5,9 H13" stroke="#111" stroke-width="1.900"/></svg></span>
<span class="ab r2" style="left:1689px;top:63px;width:52px"><svg width="18" height="18" viewBox="0 0 18 18"><circle cx="9" cy="9" r="6.800" fill="#111"/><path d="M6.200,6.200 L11.800,11.800 M11.800,6.200 L6.200,11.800" stroke="#fff" stroke-width="2.300"/></svg></span>
<span class="ab r2" style="left:1750px;top:63px;width:52px"><svg width="18" height="18" viewBox="0 0 18 18"><path d="M4.700,2.700 H13.300" stroke="#111" stroke-width="1.600"/><rect x="1.200" y="5" width="15.600" height="6.600" rx="1.200" fill="#111"/><rect x="5.100" y="9.800" width="7.800" height="6" fill="#fff" stroke="#111" stroke-width="1.300"/><circle cx="14.600" cy="6.900" r=".8" fill="#cde"/></svg></span>
<span class="ab r2" style="left:1811px;top:63px;width:51px"><svg width="18" height="18" viewBox="0 0 18 18"><path d="M3.600,3.400 H14.800 V12.800 L11.200,16.600 H3.600 Z" fill="#fff" stroke="#111" stroke-width="1.200"/><path d="M14.800,12.800 H11.200 V16.600" fill="none" stroke="#111" stroke-width="1"/><path d="M6.200,3.800 H12.200 V2.700 H10.700 A1.500,1.500 0 0 0 7.700,2.700 H6.200 Z" fill="#fff" stroke="#111" stroke-width="1"/></svg></span>
<span class="rb ss" style="left:1806px;top:17px">1</span>
<span class="rb" style="left:1851px;top:45px">0</span>
</div>
<div class="row" style="top:410px;height:60px">
<a class="lk tx" style="left:8.500px;top:49px">20210100000000197</a>
<span class="dm" style="left:152px;top:32px">Demonstração-Matriz</span>
<span class="tx" style="left:152px;top:57px;letter-spacing:.19px">66060166 - MATHEUS AUTRAN ANDRADE</span>
<span class="tx" style="left:474.500px;top:52px">19/10/2021</span>
<span class="tx" style="left:558.500px;top:52px">19/10/2021</span>
<span class="tx" style="left:642px;top:23px">1200000077</span>
<a class="lk tx" style="left:642px;top:42px">Gerar Etiquetas</a>
<a class="lk tx" style="left:642px;top:61px">Ajuste de Preço</a>
<a class="lk tx" style="left:642px;top:80px">Baixa Estoque Grade</a>
<span class="tx" style="left:786.500px;top:52px">012</span>
<span class="tx" style="left:838.500px;top:52px;letter-spacing:.19px">Compra Mercantil (NFE)</span>
<span class="tx" style="right:774px;top:52px">R$48.350,00</span>
<span class="tx" style="left:1116.500px;top:13px">Nota:</span>
<span class="bd blue" style="left:1173px;top:10px;width:84px">Checado</span>
<i class="vs" style="left:1259px;top:9px;height:25px"></i>
<span class="tx" style="left:1263px;top:13px">Financeiro:</span>
<span class="bd blue" style="left:1341px;top:10px;width:79px">Registrado</span>
<i class="dl" style="left:1116px;top:55px;width:304px"></i>
<span class="tx" style="left:1116.500px;top:85px">Estoque:</span>
<span class="bd blue" style="left:1176px;top:82px;width:61px;height:22px;line-height:20.500px">Recebido</span>
<span class="smi" style="left:1240.5px;top:86px"><svg width="13" height="13" viewBox="0 0 18 18"><rect x="7.300" y="1.600" width="3.400" height="3.400" fill="none" stroke="#333" stroke-width="1.500"/><path d="M9,5 V12 M2.900,12.400 V8.700 H15.100 V12.400" fill="none" stroke="#333" stroke-width="1.500"/><rect x="1.300" y="12.400" width="3.300" height="3.300" fill="none" stroke="#333" stroke-width="1.500"/><rect x="7.350" y="12.400" width="3.300" height="3.300" fill="none" stroke="#333" stroke-width="1.500"/><rect x="13.400" y="12.400" width="3.300" height="3.300" fill="none" stroke="#333" stroke-width="1.500"/></svg></span>
<i class="vs" style="left:1259px;top:77px;height:31px"></i>
<span class="tx" style="left:1263px;top:85px">Precificação:</span>
<span class="bd black" style="left:1341px;top:82px;width:79px;height:22px;line-height:20.500px">Precificando</span>
<i class="rl" style="left:1113px;top:111px;width:393px"></i>
<span class="ab sh" style="left:1429px;top:36px;width:52px;height:38.500px"><span class="ic" style="left:17px;top:8px"><svg width="22" height="20" viewBox="0 0 22 20"><path d="M11.600,3.600 H5.400 Q2.400,3.600 2.400,6.600 V14.400 Q2.400,17.400 5.400,17.400 H14 Q17,17.400 17,14.400 V13" fill="none" stroke="#111" stroke-width="1.900"/><path d="M13.400,0.800 L20.600,6.400 L13.400,12 V8.700 C10.400,8.700 8.400,9.700 7.200,13 C6.800,8 9.400,4.600 13.400,4.300 Z" fill="#111"/></svg></span></span>
<span class="rb" style="left:1424px;top:33px">0</span>
<span class="rb" style="left:1469px;top:61px">0</span>
<span class="ab" style="left:1566px;top:19px;width:52px"><svg width="18" height="18" viewBox="0 0 18 18"><path d="M7.700,1.200 h2.600 l.4,1.900 l1.300,.55 l1.650,-1.050 l1.800,1.800 l-1.050,1.650 l.55,1.300 l1.900,.4 v2.600 l-1.900,.4 l-.55,1.300 l1.050,1.650 l-1.800,1.800 l-1.650,-1.050 l-1.300,.55 l-.4,1.900 h-2.600 l-.4,-1.900 l-1.300,-.55 l-1.650,1.050 l-1.800,-1.800 l1.050,-1.650 l-.55,-1.300 l-1.900,-.4 v-2.600 l1.900,-.4 l.55,-1.300 l-1.050,-1.650 l1.800,-1.800 l1.650,1.050 l1.300,-.55 z" fill="none" stroke="#1a1a1a" stroke-width="1.250" stroke-linejoin="round"/><circle cx="9" cy="9" r="3.500" fill="none" stroke="#555" stroke-width=".9"/><circle cx="9" cy="9" r="1.800" fill="none" stroke="#888" stroke-width=".8"/></svg></span>
<span class="ab" style="left:1628px;top:19px;width:51px"><svg width="18" height="18" viewBox="0 0 18 18"><path d="M2.700,9.300 V4.900 H12.400" fill="none" stroke="#111" stroke-width="2.400"/><path d="M12,1.300 L16.600,4.900 L12,8.500 Z" fill="#111"/><path d="M15.300,8.700 V13.100 H5.600" fill="none" stroke="#111" stroke-width="2.400"/><path d="M6,9.500 L1.400,13.100 L6,16.700 Z" fill="#111"/></svg></span>
<span class="ab" style="left:1689px;top:19px;width:52px"><svg width="18" height="18" viewBox="0 0 18 18"><path d="M1.700,1.200 H7.200 L10.300,4.300 V11.800 H1.700 Z" fill="#fff" stroke="#222" stroke-width="1.100"/><path d="M7.200,1.200 V4.300 H10.300" fill="none" stroke="#222" stroke-width="1"/><path d="M7.900,6.300 H13.400 L16.400,9.300 V16.700 H7.900 Z" fill="#fff" stroke="#222" stroke-width="1.100"/><path d="M13.400,6.300 V9.300 H16.400" fill="none" stroke="#222" stroke-width="1"/></svg></span>
<span class="ab" style="left:1750px;top:19px;width:52px"><svg width="18" height="18" viewBox="0 -0.9 18 18"><rect x="7.300" y="1.600" width="3.400" height="3.400" fill="#fff" stroke="#111" stroke-width="1.300"/><path d="M9,5 V12 M2.900,12.400 V8.700 H15.100 V12.400" fill="none" stroke="#111" stroke-width="1.400"/><rect x="1.300" y="12.400" width="3.300" height="3.300" fill="#fff" stroke="#111" stroke-width="1.300"/><rect x="7.350" y="12.400" width="3.300" height="3.300" fill="#fff" stroke="#111" stroke-width="1.300"/><rect x="13.400" y="12.400" width="3.300" height="3.300" fill="#fff" stroke="#111" stroke-width="1.300"/></svg></span>
<span class="ab" style="left:1811px;top:19px;width:51px"><span class="ii">i</span></span>
<span class="ab r2" style="left:1566px;top:62px;width:52px"><svg width="18" height="18" viewBox="0 0 18 18"><path d="M2,1.600 H16 M2,16.400 H16" stroke="#111" stroke-width="1.500"/><path d="M3.600,2 C3.600,6 6.800,7.400 7.600,9 C6.800,10.600 3.600,12 3.600,16 M14.400,2 C14.400,6 11.200,7.400 10.400,9 C11.200,10.600 14.400,12 14.400,16" fill="none" stroke="#111" stroke-width="1.900"/><path d="M4.200,15.800 C4.600,12.800 7.600,11.800 9,9.600 C10.400,11.800 13.400,12.800 13.800,15.800 Z" fill="#111"/></svg></span>
<span class="ab r2" style="left:1627px;top:62px;width:51px"><svg width="18" height="18" viewBox="0 0 18 18"><circle cx="9" cy="9" r="6.800" fill="none" stroke="#111" stroke-width="1.800"/><path d="M5,9 H13" stroke="#111" stroke-width="1.900"/></svg></span>
<span class="ab r2" style="left:1689px;top:62px;width:52px"><svg width="18" height="18" viewBox="0 0 18 18"><circle cx="9" cy="9" r="6.800" fill="#111"/><path d="M6.200,6.200 L11.800,11.800 M11.800,6.200 L6.200,11.800" stroke="#fff" stroke-width="2.300"/></svg></span>
<span class="ab r2" style="left:1750px;top:62px;width:52px"><svg width="18" height="18" viewBox="0 0 18 18"><path d="M4.700,2.700 H13.300" stroke="#111" stroke-width="1.600"/><rect x="1.200" y="5" width="15.600" height="6.600" rx="1.200" fill="#111"/><rect x="5.100" y="9.800" width="7.800" height="6" fill="#fff" stroke="#111" stroke-width="1.300"/><circle cx="14.600" cy="6.900" r=".8" fill="#cde"/></svg></span>
<span class="ab r2" style="left:1811px;top:62px;width:51px"><svg width="18" height="18" viewBox="0 0 18 18"><path d="M3.600,3.400 H14.800 V12.800 L11.200,16.600 H3.600 Z" fill="#fff" stroke="#111" stroke-width="1.200"/><path d="M14.800,12.800 H11.200 V16.600" fill="none" stroke="#111" stroke-width="1"/><path d="M6.200,3.800 H12.200 V2.700 H10.700 A1.500,1.500 0 0 0 7.700,2.700 H6.200 Z" fill="#fff" stroke="#111" stroke-width="1"/></svg></span>
<span class="rb ss" style="left:1806px;top:16px">1</span>
<span class="rb" style="left:1851px;top:44px">0</span>
</div>
<i class="hl" style="top:160px"></i>
<i class="hl" style="top:284px"></i>
<i class="hl" style="top:409px"></i>
<i class="vl" style="left:0px"></i>
<i class="vl" style="left:144px"></i>
<i class="vl" style="left:467px"></i>
<i class="vl" style="left:550px"></i>
<i class="vl" style="left:634px"></i>
<i class="vl" style="left:779px"></i>
<i class="vl" style="left:831px"></i>
<i class="vl" style="left:993px"></i>
<i class="vl" style="left:1105px"></i>
<i class="vl" style="left:1550px"></i>
<i class="vl" style="left:1871px"></i>
</div>
<!--TABLE-END-->
</body>
</html>
